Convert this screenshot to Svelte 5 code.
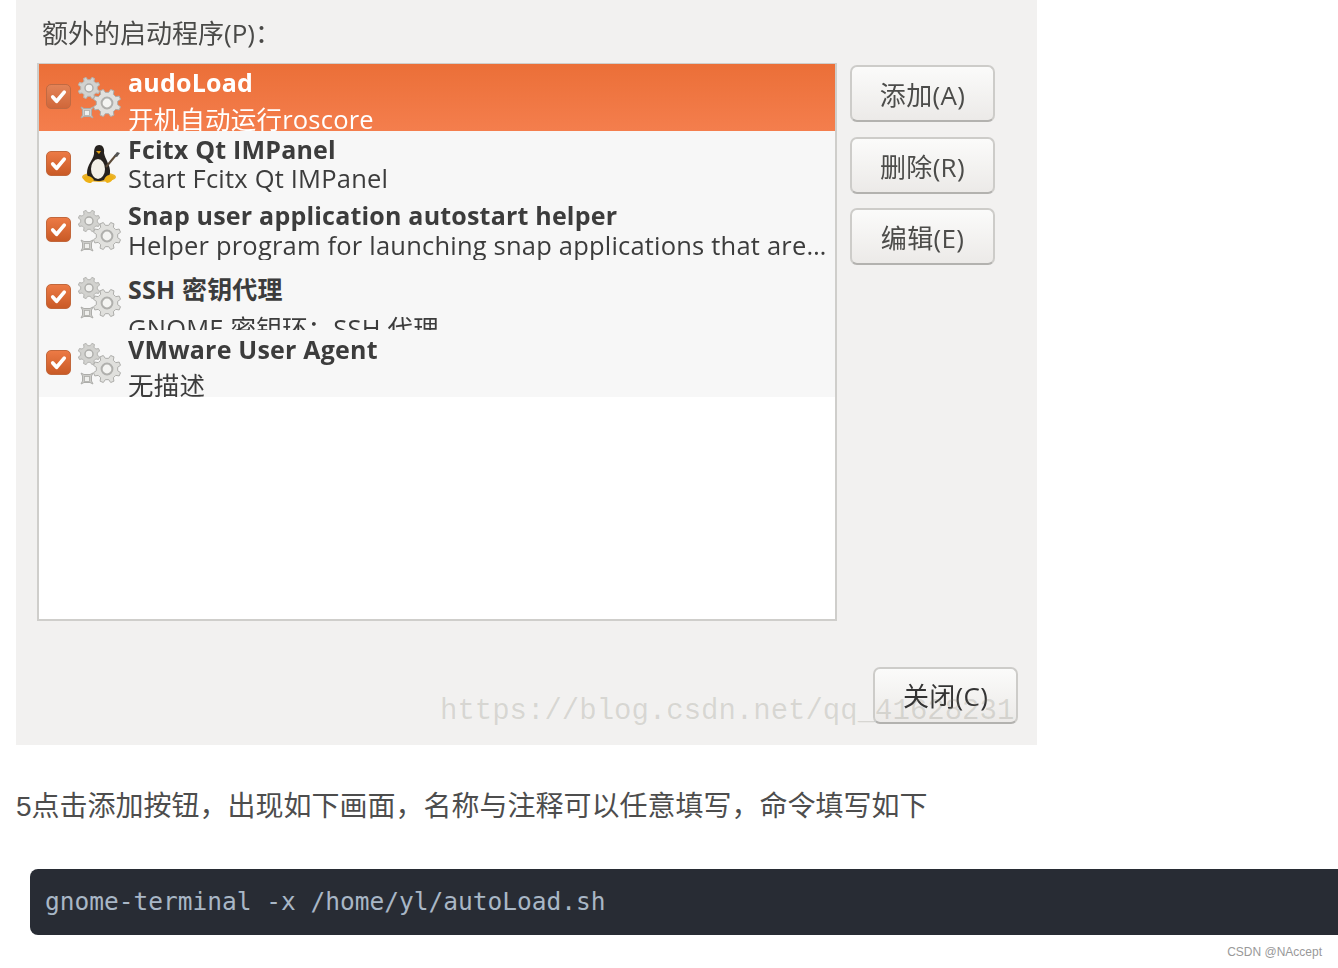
<script>
  function gear(cx, cy, ro, ri, teeth, rot = 0) {
    const pts = [];
    const step = (Math.PI * 2) / teeth;
    for (let i = 0; i < teeth; i++) {
      const a = rot + i * step;
      const w = step * 0.2;
      const p = [
        [ri, a - w * 1.5],
        [ro, a - w * 0.8],
        [ro, a + w * 0.8],
        [ri, a + w * 1.5]
      ];
      for (const [r, t] of p) pts.push(`${(cx + r * Math.cos(t)).toFixed(2)} ${(cy + r * Math.sin(t)).toFixed(2)}`);
    }
    return 'M' + pts.join('L') + 'Z';
  }
  const bigGear = gear(29, 28, 14, 10.8, 8, Math.PI / 8);
  const smallGear = gear(11, 13, 11, 8.4, 8, Math.PI / 8);

  const rows = [
    { title: 'audoLoad', desc: '开机自动运行roscore', icon: 'gear', selected: true, tt: 3, dt: 7 },
    { title: 'Fcitx Qt IMPanel', desc: 'Start Fcitx Qt IMPanel', icon: 'tux', tt: 3, dt: -1 },
    { title: 'Snap user application autostart helper', desc: 'Helper program for launching snap applications that are…', icon: 'gear', tt: 3, dt: 0 },
    { title: 'SSH 密钥代理', desc: 'GNOME 密钥环：SSH 代理', icon: 'gear', tt: 10, dt: 9 },
    { title: 'VMware User Agent', desc: '无描述', icon: 'gear', tt: 4, dt: 6 }
  ];
  const buttons = ['添加(A)', '删除(R)', '编辑(E)'];
</script>

{#snippet gears()}
  <svg class="icon" viewBox="0 0 44 46" aria-hidden="true">
    <path d={smallGear} fill="#d2d2cf" stroke="#b4b4b1" stroke-width="1" />
    <circle cx="11" cy="13" r="4" fill="#f2f2f0" stroke="#adadaa" stroke-width="1.4" />
    <path d={bigGear} fill="#e0e0dd" stroke="#adadaa" stroke-width="1" />
    <circle cx="29" cy="28" r="5.4" fill="#f4f4f2" stroke="#b0b0ad" stroke-width="2" />
    <path d="M3 32l3 1.5h6l3-1.5-1.5 3v5l1.5 3-3-1.5H6L3 43l1.5-3v-5z" fill="#cdcdca" stroke="#adadaa" />
    <rect x="6.5" y="35.5" width="5" height="5" fill="#efefed" stroke="#adadaa" stroke-width=".8" />
  </svg>
{/snippet}

{#snippet tux()}
  <svg class="icon" viewBox="0 0 44 46" aria-hidden="true">
    <ellipse cx="21" cy="35" rx="17" ry="5" fill="#e8a80f" opacity=".85" />
    <path d="M18 4c5-3 9 1 8 7 1 6 7 13 6 20-1 6-6 8-12 8S9 36 9 31c0-8 6-13 7-19 0-3 0-6 2-8z" fill="#26221f" />
    <ellipse cx="20" cy="27" rx="7" ry="10" fill="#f3f0e8" />
    <path d="M18 9l5 0-2 3z" fill="#e5a41a" />
    <path d="M5 36c3-3 8-3 11 2l-3 3c-4 0-7-2-8-5zM36 35c-3-3-8-3-10 3l3 3c3 0 6-3 7-6z" fill="#eeb116" />
    <path d="M28 25l10-12" stroke="#5b4a38" stroke-width="2" />
    <path d="M36 14l3-4 3 1-3 4z" fill="#555" />
  </svg>
{/snippet}

<div class="page">
  <section class="dialog">
    <div class="label">额外的启动程序(P)：</div>
    <div class="body">
      <div class="list">
        <div class="rows">
          {#each rows as r}
            <div class="row" class:selected={r.selected}>
              <span class="check">
                <svg viewBox="0 0 24 24" aria-hidden="true"><path d="M6 12.5l4 4.5 8-9.5" fill="none" stroke="#fff" stroke-width="3.8" stroke-linecap="round" stroke-linejoin="round" /></svg>
              </span>
              {#if r.icon === 'tux'}{@render tux()}{:else}{@render gears()}{/if}
              <div class="text">
                <div class="title" style="margin-top:{r.tt}px">{r.title}</div>
                <div class="desc" style="margin-top:{r.dt}px">{r.desc}</div>
              </div>
            </div>
          {/each}
        </div>
      </div>
      <div class="side">
        {#each buttons as b}
          <div class="btn">{b}</div>
        {/each}
      </div>
    </div>
    <div class="footer">
      <div class="btn close">关闭(C)</div>
    </div>
    <div class="mark">https://blog.csdn.net/qq_41628231</div>
  </section>

  <p class="para">5点击添加按钮，出现如下画面，名称与注释可以任意填写，命令填写如下</p>

  <pre class="code">gnome-terminal -x /home/yl/autoLoad.sh</pre>

  <div class="credit">CSDN @NAccept</div>
</div>

<style>
  :global(body) {
    margin: 0;
    background: #fff;
    overflow: hidden;
  }
  .page {
    width: 1338px;
    height: 968px;
    overflow: hidden;
    font-family: "Noto Sans CJK SC", sans-serif;
  }
  .dialog {
    position: relative;
    box-sizing: border-box;
    width: 1021px;
    height: 745px;
    margin-left: 16px;
    background: #f2f1f0;
    padding: 0 0 0 21px;
    color: #3c3c3c;
    font-family: "Open Sans", "Noto Sans CJK SC", sans-serif;
  }
  .label {
    height: 63px;
    padding-left: 5px;
    font-size: 26px;
    line-height: 67px;
    color: #4a4a48;
    filter: blur(0.4px);
  }
  .body {
    display: flex;
    gap: 13px;
    align-items: flex-start;
  }
  .list {
    box-sizing: border-box;
    width: 800px;
    height: 558px;
    background: #fff;
    border: 1px solid #cfcecb;
    border-width: 1px 2px 2px 2px;
  }
  .row {
    display: flex;
    height: 66.6px;
    overflow: hidden;
    background: #f7f7f7;
    filter: blur(0.4px);
  }
  .row.selected {
    background: linear-gradient(#eb6f38, #f47e4d);
    color: #fff;
  }
  .check {
    flex: none;
    box-sizing: border-box;
    width: 25px;
    height: 25px;
    margin: 20px 7px 0 7px;
    border-radius: 5px;
    background: linear-gradient(#ec7a45, #c95a26);
    border: 1px solid #c2673b;
    display: flex;
  }
  .selected .check {
    background: linear-gradient(#e38357, #d0673a);
    border-color: #c06a43;
  }
  .check svg {
    width: 100%;
    height: 100%;
  }
  .icon {
    flex: none;
    width: 44px;
    height: 46px;
    margin-top: 11px;
    margin-right: 6px;
  }
  .text {
    min-width: 0;
    flex: 1;
    padding-right: 8px;
  }
  .title {
    font-size: 25px;
    line-height: 30px;
    font-weight: 700;
    letter-spacing: 0.2px;
    white-space: nowrap;
  }
  .desc {
    font-size: 25.5px;
    line-height: 30px;
    letter-spacing: 0.2px;
    white-space: nowrap;
    overflow: hidden;
  }
  .side {
    display: flex;
    flex-direction: column;
    gap: 14.5px;
    padding-top: 2px;
  }
  .btn {
    box-sizing: border-box;
    width: 145px;
    height: 57px;
    border: 2px solid #cdccc9;
    border-bottom-color: #b3b2af;
    border-radius: 7px;
    background: linear-gradient(#fbfbfa, #eceae8);
    font-size: 26px;
    line-height: 56px;
    letter-spacing: 0.3px;
    text-align: center;
    color: #4c4c4a;
    filter: blur(0.4px);
  }
  .footer {
    display: flex;
    justify-content: flex-end;
    padding: 46px 19px 0 0;
  }
  .close {
    color: #333;
    line-height: 55px;
  }
  .mark {
    position: absolute;
    left: 424px;
    top: 690px;
    font-family: "Liberation Mono", monospace;
    font-size: 29px;
    line-height: 44px;
    color: rgba(120, 120, 105, 0.22);
    white-space: nowrap;
    pointer-events: none;
  }
  .para {
    margin: 43px 0 0 16px;
    font-family: "Liberation Sans", "Noto Sans CJK SC", sans-serif;
    font-size: 28px;
    line-height: 38px;
    color: #4d4d4d;
    white-space: nowrap;
  }
  .code {
    box-sizing: border-box;
    width: 1340px;
    height: 66px;
    margin: 43px 0 0 30px;
    padding: 0 15px;
    border-radius: 8px;
    background: #282c34;
    color: #a9b7c6;
    font-family: "DejaVu Sans Mono", monospace;
    font-size: 24.5px;
    line-height: 65px;
  }
  .credit {
    margin-top: 8px;
    padding-right: 16px;
    text-align: right;
    font-family: "Liberation Sans", sans-serif;
    font-size: 12px;
    line-height: 18px;
    color: #999;
  }
</style>
